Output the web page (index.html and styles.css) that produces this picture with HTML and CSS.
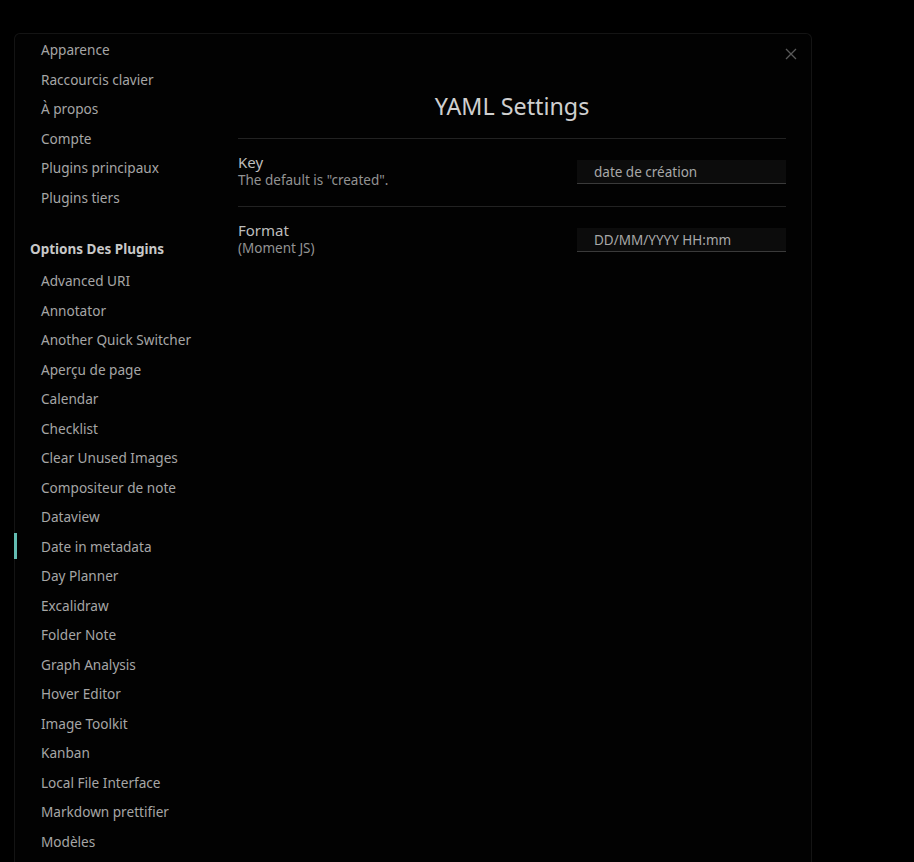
FILE: index.html
```html
<!DOCTYPE html>
<html lang="fr">
<head>
<meta charset="utf-8">
<title>YAML Settings</title>
<link rel="stylesheet" href="styles.css">
</head>
<body>
<div class="modal">
  <nav class="sidebar">
    <div class="nav-item">Apparence</div>
    <div class="nav-item">Raccourcis clavier</div>
    <div class="nav-item">À propos</div>
    <div class="nav-item">Compte</div>
    <div class="nav-item">Plugins principaux</div>
    <div class="nav-item">Plugins tiers</div>
    <div class="nav-heading">Options Des Plugins</div>
    <div class="nav-item">Advanced URI</div>
    <div class="nav-item">Annotator</div>
    <div class="nav-item">Another Quick Switcher</div>
    <div class="nav-item">Aperçu de page</div>
    <div class="nav-item">Calendar</div>
    <div class="nav-item">Checklist</div>
    <div class="nav-item">Clear Unused Images</div>
    <div class="nav-item">Compositeur de note</div>
    <div class="nav-item">Dataview</div>
    <div class="nav-item active">Date in metadata</div>
    <div class="nav-item">Day Planner</div>
    <div class="nav-item">Excalidraw</div>
    <div class="nav-item">Folder Note</div>
    <div class="nav-item">Graph Analysis</div>
    <div class="nav-item">Hover Editor</div>
    <div class="nav-item">Image Toolkit</div>
    <div class="nav-item">Kanban</div>
    <div class="nav-item">Local File Interface</div>
    <div class="nav-item">Markdown prettifier</div>
    <div class="nav-item">Modèles</div>
  </nav>
  <main class="content">
    <div class="close" aria-label="Fermer">
      <svg width="12" height="12" viewBox="0 0 12 12"><path d="M1 1 L11 11 M11 1 L1 11" stroke="#5a5a5a" stroke-width="1.3" fill="none"/></svg>
    </div>
    <h2 class="title">YAML Settings</h2>
    <div class="setting">
      <div class="setting-info">
        <div class="setting-name">Key</div>
        <div class="setting-desc">The default is "created".</div>
      </div>
      <div class="setting-control"><input class="text-input" type="text" value="date de création"></div>
    </div>
    <div class="setting last">
      <div class="setting-info">
        <div class="setting-name">Format</div>
        <div class="setting-desc">(Moment JS)</div>
      </div>
      <div class="setting-control"><input class="text-input" type="text" value="DD/MM/YYYY HH:mm"></div>
    </div>
  </main>
</div>
</body>
</html>
```
FILE: styles.css
```css
html, body {
  margin: 0;
  padding: 0;
  background: #000;
  height: 100%;
  overflow: hidden;
}
body {
  font-family: "Noto Sans", "Open Sans", sans-serif;
  color: #a8a8a8;
}
.modal {
  margin: 33px 0 0 14px;
  width: 798px;
  height: 900px;
  box-sizing: border-box;
  border: 1px solid #141414;
  border-bottom: none;
  border-radius: 6px 6px 0 0;
  background: #020202;
  display: flex;
}
.sidebar {
  width: 223px;
  flex: none;
  padding-top: 1px;
}
.nav-item {
  position: relative;
  font-size: 13.6px;
  line-height: 17.5px;
  padding: 6px 0 6px 26px;
  color: #a6a6a6;
  white-space: nowrap;
}
.nav-item.active::before {
  content: "";
  position: absolute;
  left: -1px;
  top: 1.5px;
  width: 3px;
  height: 26px;
  background: #63bcb2;
}
.nav-heading {
  font-size: 13.5px;
  font-weight: 700;
  color: #c8c8c8;
  line-height: 20px;
  padding: 27px 0 7px 15px;
}
.content {
  flex: 1;
  position: relative;
  padding: 57px 25px 0 0;
}
.close {
  position: absolute;
  top: 14px;
  right: 14px;
  width: 12px;
  height: 12px;
}
.close svg { display: block; }
.title {
  margin: 0 0 17px;
  font-size: 23.3px;
  line-height: 30px;
  font-weight: 400;
  color: #cfcfcf;
  text-align: center;
}
.setting {
  display: flex;
  align-items: center;
  justify-content: space-between;
  border-top: 1px solid #222;
  padding: 14px 0 16px;
}
.setting-info {
  display: flex;
  flex-direction: column;
  padding-bottom: 2px;
}
.setting-name {
  font-size: 15px;
  line-height: 19px;
  color: #bdbdbd;
}
.setting-desc {
  font-size: 13.5px;
  line-height: 16px;
  color: #939393;
}
.text-input {
  width: 209px;
  height: 24px;
  box-sizing: border-box;
  background: #0c0c0c;
  border: none;
  border-bottom: 1px solid #3a3a3a;
  padding: 1px 0 0 17px;
  font-family: inherit;
  font-size: 13.5px;
  color: #a8a8a8;
  outline: none;
}
```
